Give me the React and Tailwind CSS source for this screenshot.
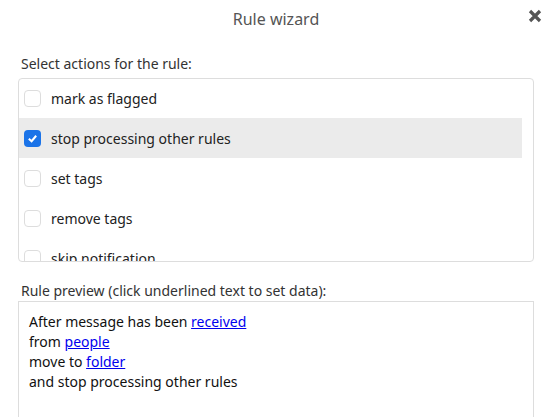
import { useState } from 'react'

const actions = [
  { key: 'flag', label: 'mark as flagged' },
  { key: 'stop', label: 'stop processing other rules' },
  { key: 'setTags', label: 'set tags' },
  { key: 'removeTags', label: 'remove tags' },
  { key: 'skip', label: 'skip notification' },
]

export default function App() {
  const [checked, setChecked] = useState({ stop: true })

  return (
    <div className="w-[552px] h-[417px] overflow-hidden bg-white text-[#222] font-['Segoe_UI','Noto_Sans',sans-serif]">
      {/* Header */}
      <div className="relative h-[38px] flex items-center justify-center">
        <span className="text-[16px] text-[#555]">Rule wizard</span>
        <button type="button" className="absolute right-[10px] top-[9px] w-[14px] h-[14px] text-[#555]">
          <svg viewBox="0 0 14 14" className="w-[14px] h-[14px]">
            <path d="M2 2 L12 12 M12 2 L2 12" stroke="currentColor" strokeWidth="3.2" strokeLinecap="butt" />
          </svg>
        </button>
      </div>

      <div className="px-[18px]">
        <div className="text-[14px] pl-[3px] mt-[16px] leading-[20px] text-[#333]">Select actions for the rule:</div>
        <div className="mt-[4px] h-[184px] border border-[#ddd] rounded-[4px] overflow-hidden pr-[11px]">
          <div className="-mt-[1px]">
            {actions.map(a => (
              <label
                key={a.key}
                className={`flex items-center h-[40px] gap-[10px] pl-[5px] cursor-pointer text-[14px] ${checked[a.key] ? 'bg-[#ebebeb]' : ''}`}
              >
                <span
                  className={`w-[17px] h-[17px] rounded-[4px] flex items-center justify-center shrink-0 ${
                    checked[a.key] ? 'bg-[#1a73e8]' : 'border border-[#ddd] bg-white'
                  }`}
                  onClick={() => setChecked(c => ({ ...c, [a.key]: !c[a.key] }))}
                >
                  {checked[a.key] && (
                    <svg viewBox="0 0 12 12" className="w-[11px] h-[11px]">
                      <path d="M2 6.2 L5 9 L10 3" fill="none" stroke="white" strokeWidth="2.2" />
                    </svg>
                  )}
                </span>
                <span className="text-[#222]">{a.label}</span>
              </label>
            ))}
          </div>
        </div>

        <div className="text-[14px] pl-[3px] mt-[19px] leading-[20px] text-[#333]">Rule preview (click underlined text to set data):</div>
        <div className="h-[140px] border border-[#ddd] px-[10px] pt-[10px] text-[14px] leading-[20px] text-[#111]">
          <div>After message has been <a href="#" className="text-[#0000ee] underline">received</a></div>
          <div>from <a href="#" className="text-[#0000ee] underline">people</a></div>
          <div>move to <a href="#" className="text-[#0000ee] underline">folder</a></div>
          <div>and stop processing other rules</div>
        </div>
      </div>
    </div>
  )
}
